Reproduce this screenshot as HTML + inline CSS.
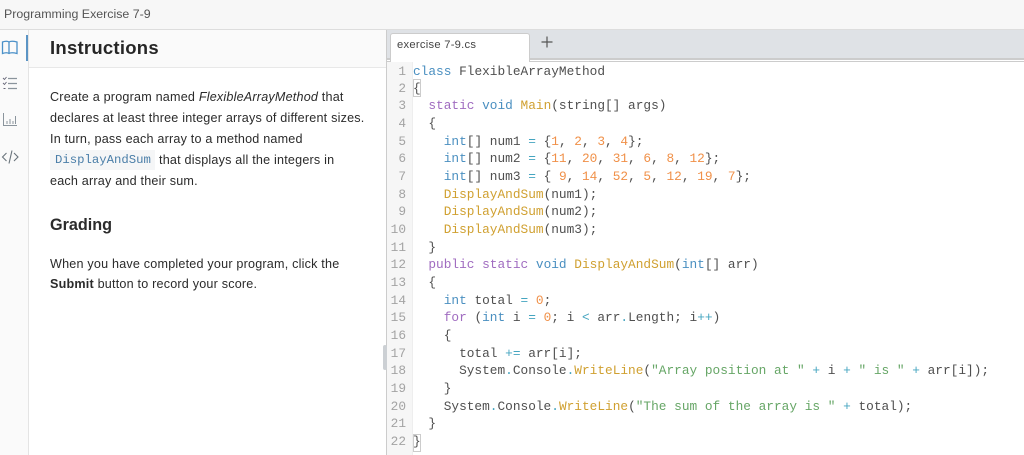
<!DOCTYPE html>
<html><head><meta charset="utf-8"><style>
html,body{margin:0;padding:0;background:#fff}
#p{position:relative;width:1024px;height:455px;overflow:hidden;background:#fff;font-family:"Liberation Sans",sans-serif;color:#262626}
.a{position:absolute}
.t{position:absolute;white-space:nowrap;font-size:12.6px;line-height:16px;color:#2b2b2b;letter-spacing:.2px}
.l{position:absolute;white-space:pre;font-family:"Liberation Mono",monospace;font-size:12.8px;line-height:18px;left:413px;color:#4f4f4f}
.n{position:absolute;white-space:pre;font-family:"Liberation Mono",monospace;font-size:12.8px;line-height:18px;width:20px;left:386px;text-align:right;color:#a3a3a3}
.k{color:#4a8fc0}.p{color:#a06cc0}.f{color:#d0a030}.o{color:#f09048}.s{color:#66a666}.c{color:#45a5c0}
</style></head><body><div id="p">
<div class="a" style="left:0;top:0;width:1024px;height:29px;background:#f7f7f7;border-bottom:1px solid #ddd"></div>
<div class="t" style="left:4px;top:6px;font-size:12.4px;color:#555;letter-spacing:0">Programming Exercise 7-9</div>
<div class="a" style="left:0;top:30px;width:28px;height:425px;background:#fafafa;border-right:1px solid #e4e4e4"></div>
<div class="a" style="left:29px;top:30px;width:357px;height:37px;background:#fafafa;border-bottom:1px solid #e8e8e8"></div>
<div class="a" style="left:26px;top:35px;width:2px;height:26px;background:#5b94c4"></div>
<svg class="a" style="left:0;top:30px" width="28" height="140" fill="none">
<path d="M2.5 12c3-1 5-1 6.500 0c1.500-1 4-1 8 0v11.500c-4-1-6.500-1-8 0c-1.500-1-3.500-1-6.500 0zM9 12v11.500" stroke="#4a90c8" stroke-width="1.300"/>
<path d="M8 48.500h9M8 53.500h9M8 58.500h9" stroke="#8a949c" stroke-width="1.300"/>
<path d="M3 48l1.500 1.500l2-2.500M3 53l1.500 1.500l2-2.500" stroke="#667" stroke-width=".9"/>
<path d="M3.500 58.500h2" stroke="#667" stroke-width="1"/>
<path d="M3.500 83v12.500h13.500" stroke="#8a949c" stroke-width="1"/>
<path d="M7 94v-3M10 94v-5M13 94v-3M15.500 94v-8" stroke="#8a949c" stroke-width="1"/>
<path d="M6.500 123l-4 4l4 4M14 123l4 4l-4 4M12 120.500l-3 13" stroke="#6a747c" stroke-width="1.100"/>
</svg>
<div class="t" style="left:50px;top:37px;font-size:18.500px;line-height:22px;font-weight:bold;color:#262626;letter-spacing:.25px">Instructions</div>
<div class="t" style="left:50px;top:89px">Create a program named <i>FlexibleArrayMethod</i> that</div>
<div class="t" style="left:50px;top:110px">declares at least three integer arrays of different sizes.</div>
<div class="t" style="left:50px;top:131px">In turn, pass each array to a method named</div>
<div class="a" style="left:50px;top:150px;width:105px;height:20px;background:#f5f6f7"></div>
<div class="t" style="left:55px;top:152px;font-family:'Liberation Mono',monospace;font-size:12.300px;color:#4a7ea8;letter-spacing:0">DisplayAndSum</div>
<div class="t" style="left:159px;top:152px">that displays all the integers in</div>
<div class="t" style="left:50px;top:173px">each array and their sum.</div>
<div class="t" style="left:50px;top:215px;font-size:16.200px;line-height:20px;font-weight:bold;letter-spacing:0">Grading</div>
<div class="t" style="left:50px;top:256px">When you have completed your program, click the</div>
<div class="t" style="left:50px;top:276px"><b>Submit</b> button to record your score.</div>
<div class="a" style="left:386px;top:30px;width:1px;height:425px;background:#ccc"></div>
<div class="a" style="left:387px;top:30px;width:637px;height:28px;background:#dfe2e6;border-bottom:2px solid #ccc"></div>
<div class="a" style="left:387px;top:61px;width:637px;height:1px;background:#ccc"></div>
<div class="a" style="left:390px;top:33px;width:138px;height:28px;background:#fff;border:1px solid #ccc;border-bottom:0;border-radius:3px 3px 0 0"></div>
<div class="t" style="left:397px;top:37px;font-size:11.200px;color:#444;letter-spacing:.27px">exercise 7-9.cs</div>
<svg class="a" style="left:540px;top:35px" width="14" height="14"><path d="M1.500 7h11M7 1.500v11" stroke="#555" stroke-width="1.200"/></svg>
<div class="a" style="left:387px;top:62px;width:25px;height:393px;background:#f6f6f6;border-right:1px solid #eee"></div>
<div class="a" style="left:383px;top:345px;width:4px;height:25px;background:#ccd0d4;border-radius:2px"></div>
<div class="a" style="left:413px;top:79px;width:6px;height:16px;border:1px solid #ccc"></div>
<div class="a" style="left:413px;top:434px;width:6px;height:16px;border:1px solid #ccc"></div>
<div class="n" style="top:63px">1</div><div class="n" style="top:80px">2</div><div class="n" style="top:97px">3</div><div class="n" style="top:115px">4</div><div class="n" style="top:133px">5</div><div class="n" style="top:150px">6</div><div class="n" style="top:168px">7</div><div class="n" style="top:186px">8</div><div class="n" style="top:203px">9</div><div class="n" style="top:221px">10</div><div class="n" style="top:239px">11</div><div class="n" style="top:256px">12</div><div class="n" style="top:274px">13</div><div class="n" style="top:292px">14</div><div class="n" style="top:309px">15</div><div class="n" style="top:327px">16</div><div class="n" style="top:345px">17</div><div class="n" style="top:362px">18</div><div class="n" style="top:380px">19</div><div class="n" style="top:398px">20</div><div class="n" style="top:415px">21</div><div class="n" style="top:433px">22</div>
<div class="l" style="top:63px"><span class="k">class</span> FlexibleArrayMethod</div>
<div class="l" style="top:80px">{</div>
<div class="l" style="top:97px">  <span class="p">static</span> <span class="k">void</span> <span class="f">Main</span>(string[] args)</div>
<div class="l" style="top:115px">  {</div>
<div class="l" style="top:133px">    <span class="k">int</span>[] num1 <span class="c">=</span> {<span class="o">1</span>, <span class="o">2</span>, <span class="o">3</span>, <span class="o">4</span>};</div>
<div class="l" style="top:150px">    <span class="k">int</span>[] num2 <span class="c">=</span> {<span class="o">11</span>, <span class="o">20</span>, <span class="o">31</span>, <span class="o">6</span>, <span class="o">8</span>, <span class="o">12</span>};</div>
<div class="l" style="top:168px">    <span class="k">int</span>[] num3 <span class="c">=</span> { <span class="o">9</span>, <span class="o">14</span>, <span class="o">52</span>, <span class="o">5</span>, <span class="o">12</span>, <span class="o">19</span>, <span class="o">7</span>};</div>
<div class="l" style="top:186px">    <span class="f">DisplayAndSum</span>(num1);</div>
<div class="l" style="top:203px">    <span class="f">DisplayAndSum</span>(num2);</div>
<div class="l" style="top:221px">    <span class="f">DisplayAndSum</span>(num3);</div>
<div class="l" style="top:239px">  }</div>
<div class="l" style="top:256px">  <span class="p">public</span> <span class="p">static</span> <span class="k">void</span> <span class="f">DisplayAndSum</span>(<span class="k">int</span>[] arr)</div>
<div class="l" style="top:274px">  {</div>
<div class="l" style="top:292px">    <span class="k">int</span> total <span class="c">=</span> <span class="o">0</span>;</div>
<div class="l" style="top:309px">    <span class="p">for</span> (<span class="k">int</span> i <span class="c">=</span> <span class="o">0</span>; i <span class="c">&lt;</span> arr<span class="c">.</span>Length; i<span class="c">++</span>)</div>
<div class="l" style="top:327px">    {</div>
<div class="l" style="top:345px">      total <span class="c">+=</span> arr[i];</div>
<div class="l" style="top:362px">      System<span class="c">.</span>Console<span class="c">.</span><span class="f">WriteLine</span>(<span class="s">"Array position at "</span> <span class="c">+</span> i <span class="c">+</span> <span class="s">" is "</span> <span class="c">+</span> arr[i]);</div>
<div class="l" style="top:380px">    }</div>
<div class="l" style="top:398px">    System<span class="c">.</span>Console<span class="c">.</span><span class="f">WriteLine</span>(<span class="s">"The sum of the array is "</span> <span class="c">+</span> total);</div>
<div class="l" style="top:415px">  }</div>
<div class="l" style="top:433px">}</div>
</div></body></html>
